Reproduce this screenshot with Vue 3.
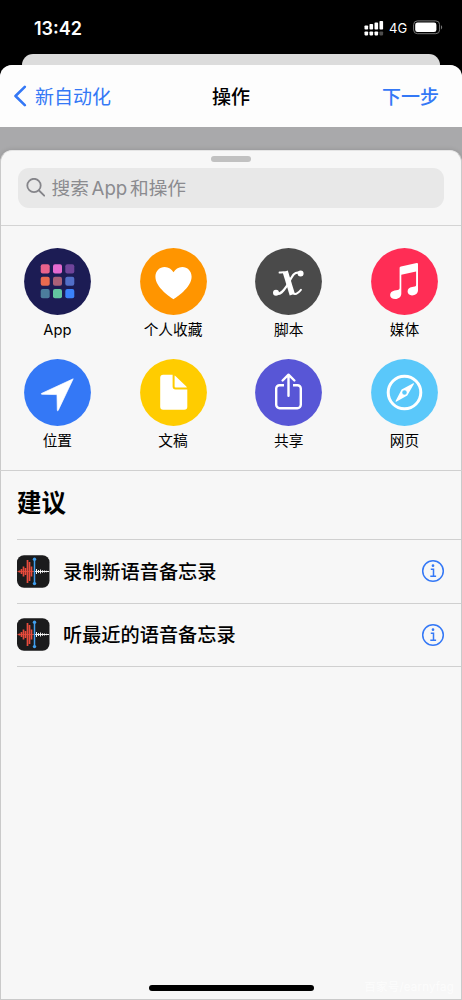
<script setup>
const squares = ['#e8628c', '#e56ad0', '#70449a', '#e96a50', '#a96078', '#526fc8', '#4c7d9d', '#62c6a0', '#3a82fb']
const categories = [
  { id: 'app', label: 'App', color: '#1c1c54' },
  { id: 'heart', label: '个人收藏', color: '#ff9500' },
  { id: 'script', label: '脚本', color: '#4a4a4a' },
  { id: 'media', label: '媒体', color: '#ff2d55' },
  { id: 'location', label: '位置', color: '#3478f6' },
  { id: 'doc', label: '文稿', color: '#ffcc00' },
  { id: 'share', label: '共享', color: '#5856d6' },
  { id: 'web', label: '网页', color: '#5ac8fa' },
]
const suggestions = ['录制新语音备忘录', '听最近的语音备忘录']
const redBars = [[2.500, 2], [4.500, 5], [6.500, 10], [8.500, 7], [10.500, 23], [12.500, 19], [14.500, 10]]
const whiteBars = [[19.500, 5], [21.500, 3], [23.500, 4], [25.500, 2.500], [27.500, 2], [29.500, 1.500]]
</script>

<template>
  <div class="screen">
    <header class="status">
      <span class="time">13:42</span>
      <div class="status-right">
        <svg class="signal" width="20" height="16" viewBox="0 0 20 16">
          <g fill="#fff">
            <rect x="0.5" y="5.5" width="3.6" height="4" rx="0.8" />
            <rect x="5.5" y="4" width="3.6" height="5.5" rx="0.8" />
            <rect x="10.5" y="2.6" width="3.6" height="6.9" rx="0.8" />
            <rect x="15.5" y="1" width="3.6" height="8.5" rx="0.8" />
            <rect x="0.5" y="11.4" width="3.6" height="4" rx="0.8" />
            <rect x="5.5" y="11.4" width="3.6" height="4" rx="0.8" />
            <rect x="10.5" y="11.4" width="3.6" height="4" rx="0.8" />
            <rect x="15.5" y="11.4" width="3.6" height="4" rx="0.8" opacity="0.3" />
          </g>
        </svg>
        <span class="net">4G</span>
        <svg class="battery" width="31" height="15" viewBox="0 0 31 15">
          <rect x="0.6" y="0.9" width="26" height="12.8" rx="3.8" fill="none" stroke="#777" />
          <rect x="2.2" y="2.5" width="21.2" height="9.6" rx="2.3" fill="#fff" />
          <path d="M28 5.2c1.6.7 1.6 3.500 0 4.200z" fill="#777" />
        </svg>
      </div>
    </header>
    <div class="back-card"></div>
    <div class="page">
      <nav class="nav">
        <span class="back">
          <svg width="14" height="22" viewBox="0 0 14 22"><path d="M11.800 1.800 2.500 11l9.300 9.200" fill="none" stroke="#3478f6" stroke-width="2.600" stroke-linecap="round" stroke-linejoin="round" /></svg>
          <span class="lift">新自动化</span>
        </span>
        <span class="title lift">操作</span>
        <span class="next lift">下一步</span>
      </nav>
      <main class="sheet">
        <div class="search-area">
          <div class="grabber"></div>
          <div class="search">
            <svg width="20" height="20" viewBox="0 0 20 20" fill="none" stroke="#85858a" stroke-width="1.800" stroke-linecap="round"><circle cx="8" cy="7.500" r="6.700" /><path d="m13 12.500 5.200 5.200" /></svg>
            <span>搜索 App 和操作</span>
          </div>
        </div>
        <section class="grid">
          <div v-for="c in categories" :key="c.id" class="category">
            <svg width="67" height="67" viewBox="0 0 67 67">
              <circle cx="33.500" cy="33.500" r="33.400" :fill="c.color" />
              <template v-if="c.id === 'app'">
                <rect v-for="(s, i) in squares" :key="i" :x="16.700 + (i % 3) * 12.300" :y="16.300 + Math.floor(i / 3) * 12.400" width="9" height="9.100" rx="2" :fill="s" />
              </template>
              <path v-else-if="c.id === 'heart'" fill="#fff" d="M33.500 51.200C31 49.600 15.400 39.500 15.400 28.700c0-5.700 4.200-9.700 9.300-9.700 4 0 7 2.200 8.800 5.300 1.800-3.100 4.800-5.300 8.800-5.300 5.100 0 9.300 4 9.300 9.700 0 10.800-15.600 20.900-18.100 22.500z" />
              <g v-else-if="c.id === 'script'" fill="none" stroke="#fff" stroke-linecap="round">
                <path d="M24.600 24.600C29.700 24 31.200 23.200 33 29l4.200 14.300c1.200 3.800 3.800 4 8.700-1.500" stroke-width="2" />
                <path d="M30.200 23.400 37.300 46.600" stroke-width="5.400" stroke-linecap="butt" />
                <path d="M45 25.100c-7-3-9.300 7.500-13.700 13.600-3 4.500-5.800 8.200-10.300 7" stroke-width="2.200" />
                <circle cx="45.600" cy="25.400" r="2.200" fill="#fff" stroke-width="1.600" />
                <circle cx="21" cy="44.800" r="2.200" fill="#fff" stroke-width="1.600" />
              </g>
              <g v-else-if="c.id === 'media'" fill="#fff">
                <path d="M28.600 20.200c0-.9.500-1.500 1.400-1.700L45.700 15c.8-.2 1.300.2 1.300 1v26.200c0 3-2.600 5.200-6 5.200-2.600 0-4.400-1.500-4.400-3.800 0-2.400 1.600-3.900 4.500-4.500l2.700-.6c1-.2 1.300-.7 1.300-1.700V23.500L30.300 26.700V45.600c0 3.200-2.500 5.500-6 5.500-3 0-5.200-1.600-5.200-4 0-2.300 1.700-3.900 4.500-4.500l3.100-.6c1.300-.3 1.900-.8 1.900-2z" />
              </g>
              <path v-else-if="c.id === 'location'" d="M49.200 19.800 17.400 34.500q-.4.700.4.800l15.200.3.300 15.800q.4.800.9 0z" fill="#fff" stroke="#fff" stroke-width="0.700" stroke-linejoin="round" />
              <g v-else-if="c.id === 'doc'" fill="#fff">
                <path d="M23.200 15.700h9.400v11.800a3 3 0 0 0 3 3h11.700v17.200a3 3 0 0 1-3 3H23.200a3 3 0 0 1-3-3v-29a3 3 0 0 1 3-3z" />
                <path d="M34.600 16.500q.4.100.8.500l10.700 10.300q.7.700.8 1.200H35.600a1 1 0 0 1-1-1z" />
              </g>
              <g v-else-if="c.id === 'share'" fill="none" stroke="#fff" stroke-width="2.400" stroke-linecap="round" stroke-linejoin="round">
                <path d="M29 26.200h-4.400a3.400 3.400 0 0 0-3.400 3.400v16.200a3.400 3.400 0 0 0 3.400 3.400h17.800a3.400 3.400 0 0 0 3.400-3.400V29.600a3.400 3.400 0 0 0-3.400-3.400H38" stroke-linecap="butt" />
                <path d="M33.500 36.800V16M27.600 21.500l5.900-5.800 5.900 5.800" />
              </g>
              <g v-else fill="none" stroke="#fff">
                <circle cx="33.500" cy="33.500" r="16.300" stroke-width="3" />
                <path fill="#fff" fill-rule="evenodd" stroke="none" d="M42.300 24.200q.9-.2.600.7L36.300 36.400 25.200 42.800q-.9.200-.6-.7L30.600 30.600zM33.500 31.200a2.300 2.300 0 1 0 0 4.600 2.300 2.300 0 0 0 0-4.600z" />
              </g>
            </svg>
            <span>{{ c.label }}</span>
          </div>
        </section>
        <h2>建议</h2>
        <ul>
          <li v-for="s in suggestions" :key="s">
            <svg class="memo" width="33" height="33" viewBox="0 0 33 33">
              <rect width="32.500" height="32.500" x="0" y="0.200" rx="7" fill="#1b1b1c" />
              <g stroke="#e84b3c" stroke-width="1.700"><path d="M0.500 16.500H17" stroke-width="0.800" /><path v-for="b in redBars" :key="b[0]" :d="`M${b[0]} ${16.500 - b[1] / 2}v${b[1]}`" /></g>
              <g stroke="#f4f4f4" stroke-width="1"><path d="M18 16.500H32" /><path v-for="b in whiteBars" :key="b[0]" :d="`M${b[0]} ${16.500 - b[1] / 2}v${b[1]}`" /></g>
              <path d="M17.500 4.500v24" stroke="#409fee" stroke-width="1.500" />
              <circle cx="17.500" cy="4.300" r="1.700" fill="#409fee" /><circle cx="17.500" cy="28.600" r="1.700" fill="#409fee" />
            </svg>
            <span>{{ s }}</span>
            <svg class="info" width="24" height="24" viewBox="0 0 24 24" fill="none" stroke="#3478f6">
              <circle cx="12" cy="12" r="10.300" stroke-width="1.500" />
              <circle cx="12" cy="6.700" r="1.350" fill="#3478f6" stroke="none" />
              <path d="M9.800 10.200h2.700v6.900M9.300 17.200h5.800" stroke-width="1.500" />
            </svg>
          </li>
        </ul>
        <footer>
          <div class="home"></div>
          <span class="watermark">百家号/earnyfag</span>
        </footer>
      </main>
    </div>
  </div>
</template>

<style>
body { margin: 0; background: #000; }
</style>

<style scoped>
.screen {
  width: 462px; height: 1000px; overflow: hidden; background: #000;
  display: flex; flex-direction: column; color: #000;
  font-family: Inter, "Noto Sans CJK SC", sans-serif;
}
.status { height: 53.5px; flex: none; display: flex; justify-content: space-between; box-sizing: border-box; padding: 0 18px 0 34px; color: #fff; }
.time { font-size: 18px; font-weight: 600; line-height: 57px; }
.status-right { display: flex; align-items: center; height: 55px; }
.net { font-size: 13px; margin: 1px 5px 0 5px; width: 19px; }
.back-card { flex: none; height: 11.5px; margin: 0 22px; border-radius: 11px 11px 0 0; background: #dcdcdc; }
.page { flex: 1; background: #a9a9ab; border-radius: 12px 12px 0 0; overflow: hidden; display: flex; flex-direction: column; }
.nav { height: 62px; flex: none; display: grid; grid-template-columns: 1fr auto 1fr; align-items: center; background: #fdfdfd; padding: 0 23px 0 13px; font-size: 19px; color: #3478f6; }
.back { display: flex; align-items: center; gap: 8px; }
.lift { padding-bottom: 2px; }
.title { color: #000; font-weight: 500; padding-left: 10px; }
.next { text-align: right; font-weight: 500; }
.sheet { flex: 1; margin-top: 23px; background: #f7f7f7; border: 1px solid #cacaca; border-top-color: #e5e5e5; border-radius: 12px 12px 0 0; display: flex; flex-direction: column; box-shadow: 0 0 5px rgba(0,0,0,.15); }
.search-area { height: 74px; border-bottom: 1px solid #d4d4d4; }
.grabber { width: 40px; height: 6px; border-radius: 3px; background: #c1c1c1; margin: 5px auto 0; }
.search { height: 40px; margin: 6px 17px 0; border-radius: 11px; background: #e8e8e8; display: flex; align-items: center; gap: 5.500px; padding-left: 8px; color: #8b8b8f; font-size: 18.7px; word-spacing: -2.600px; white-space: nowrap; }
.search span { padding-bottom: 3px; }
.grid { height: 245px; box-sizing: border-box; border-bottom: 1px solid #d0d0d0; display: grid; grid-template-columns: repeat(4, 115.700px); grid-template-rows: 111.600px 111.600px; padding-top: 21.700px; margin: 0 -1px 0 -1.500px; }
.category { display: flex; flex-direction: column; align-items: center; font-size: 14.700px; line-height: 20px; gap: 5px; }
h2 { height: 68px; line-height: 65px; margin: 0 0 0 16px; font-size: 24.500px; font-weight: 700; border-bottom: 1px solid #d0d0d0; }
ul { margin: 0 0 0 16px; padding: 0; list-style: none; }
li { height: 62.500px; display: flex; align-items: center; border-bottom: 1px solid #d0d0d0; font-size: 19.200px; font-weight: 500; padding-right: 16px; }
li span { margin-left: 13px; padding-bottom: 1px; }
.info { margin-left: auto; }
footer { margin-top: auto; height: 22px; display: flex; justify-content: center; position: relative; }
.home { width: 165px; height: 6px; border-radius: 3px; background: #000; margin-top: 8px; }
.watermark { position: absolute; right: 7px; top: 1px; font-size: 11.500px; letter-spacing: .2px; color: #fff; opacity: .7; }
</style>
